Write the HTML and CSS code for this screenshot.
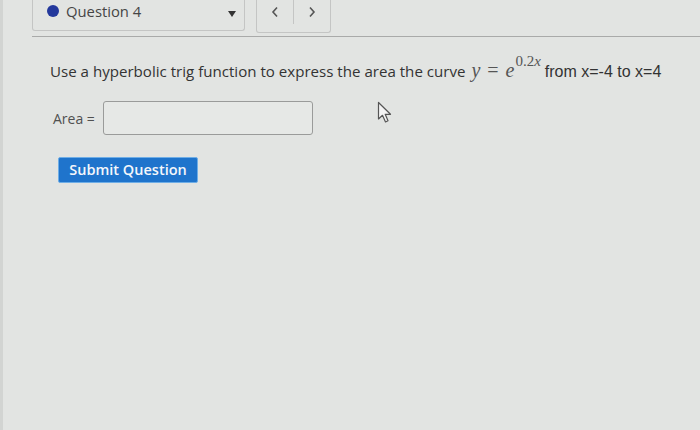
FILE: index.html
```html
<!DOCTYPE html>
<html>
<head>
<meta charset="utf-8">
<link rel="stylesheet" href="styles.css">
</head>
<body>
<div class="page">
  <div class="topbar">
    <div class="qselect">
      <span class="dot"></span>
      <span class="qlabel">Question 4</span>
      <span class="caret"></span>
    </div>
    <div class="nav">
      <div class="navbtn"><svg width="8" height="12" viewBox="0 0 8 12"><path d="M6 1.5 L2 6 L6 10.5" fill="none" stroke="#555" stroke-width="1.6"/></svg></div>
      <div class="navbtn"><svg width="8" height="12" viewBox="0 0 8 12"><path d="M2 1.5 L6 6 L2 10.5" fill="none" stroke="#555" stroke-width="1.6"/></svg></div>
    </div>
  </div>
  <div class="content">
    <p class="question">Use a hyperbolic trig function to express the area the curve <span class="math"><i>y</i><span class="eq">=</span><i>e</i><sup><span>0.2</span><i>x</i></sup></span> <span class="tail">from x=-4 to x=4</span></p>
    <div class="answer">
      <label class="alabel">Area =</label>
      <div class="input"></div>
      <svg class="cursor" width="16" height="24" viewBox="0 0 16 24"><path d="M1.5 1.5 L1.5 18 L5.5 14.3 L8.5 21 L11 19.8 L8.2 13.3 L13.5 13.3 Z" fill="#f4f4f4" stroke="#555" stroke-width="1.2" stroke-linejoin="round"/></svg>
    </div>
    <div class="btnrow">
      <button class="submit">Submit Question</button>
    </div>
  </div>
</div>
</body>
</html>
```
FILE: styles.css
```css
html, body {
  margin: 0;
  padding: 0;
}
body {
  width: 700px;
  height: 430px;
  overflow: hidden;
  background: #e2e4e2;
  font-family: "Open Sans", "Noto Sans", sans-serif;
  color: #3a3a3a;
}
.page {
  height: 430px;
  border-left: 3px solid #d2d4d2;
  box-sizing: border-box;
}
.topbar {
  margin-left: 29px;
  height: 36px;
  border-bottom: 1px solid #a9aaa9;
  display: flex;
  align-items: flex-start;
}
.qselect {
  width: 213px;
  height: 31px;
  box-sizing: border-box;
  border: 1px solid #c4c5c4;
  border-top: none;
  border-radius: 0 0 3px 3px;
  display: flex;
  align-items: center;
  padding: 0 0 8px 14px;
}
.dot {
  width: 12px;
  height: 12px;
  border-radius: 50%;
  background: #23389c;
  margin-right: 7px;
}
.qlabel {
  font-size: 14.8px;
  color: #454545;
}
.caret {
  margin-left: auto;
  margin-right: 8px;
  margin-top: 5px;
  width: 0;
  height: 0;
  border-left: 4px solid transparent;
  border-right: 4px solid transparent;
  border-top: 6px solid #333;
}
.nav {
  margin-left: 11px;
  display: flex;
  height: 32px;
  border: 1px solid #c4c5c4;
  border-top: none;
  border-radius: 0 0 3px 3px;
}
.navbtn {
  width: 36px;
  height: 24px;
  display: flex;
  align-items: center;
  justify-content: center;
}
.navbtn + .navbtn {
  border-left: 1px solid #c4c5c4;
}
.content {
  padding-left: 47px;
}
.question {
  margin: 19px 0 0 0;
  font-size: 15.1px;
  color: #333;
  white-space: nowrap;
}
.math {
  font-family: "Liberation Serif", "DejaVu Serif", serif;
  font-size: 20px;
  color: #555;
  margin-left: 2px;
}
.math i {
  font-style: italic;
}
.eq {
  margin: 0 7px 0 7px;
}
.math sup {
  font-size: 15px;
  position: relative;
  top: -3px;
  margin-left: 1px;
}
.tail {
  font-family: "Liberation Sans", Arial, sans-serif;
  font-size: 16px;
}
.answer {
  margin-top: 19px;
  margin-left: 3px;
  display: flex;
  align-items: center;
  height: 35px;
}
.alabel {
  font-size: 14px;
  color: #505050;
  width: 50px;
}
.input {
  width: 210px;
  height: 34px;
  box-sizing: border-box;
  border: 1px solid #9a9b9a;
  border-radius: 3px;
  background: #e6e8e6;
}
.cursor {
  margin-left: 64px;
  align-self: flex-start;
}
.btnrow {
  margin-top: 21px;
  margin-left: 8px;
}
.submit {
  width: 140px;
  height: 26px;
  border: 1px solid #6faee6;
  border-radius: 2px;
  background: #1f74cc;
  color: #f4f7fb;
  font-family: "Open Sans", "Noto Sans", sans-serif;
  font-weight: 600;
  font-size: 14.5px;
  padding: 0;
}
```
